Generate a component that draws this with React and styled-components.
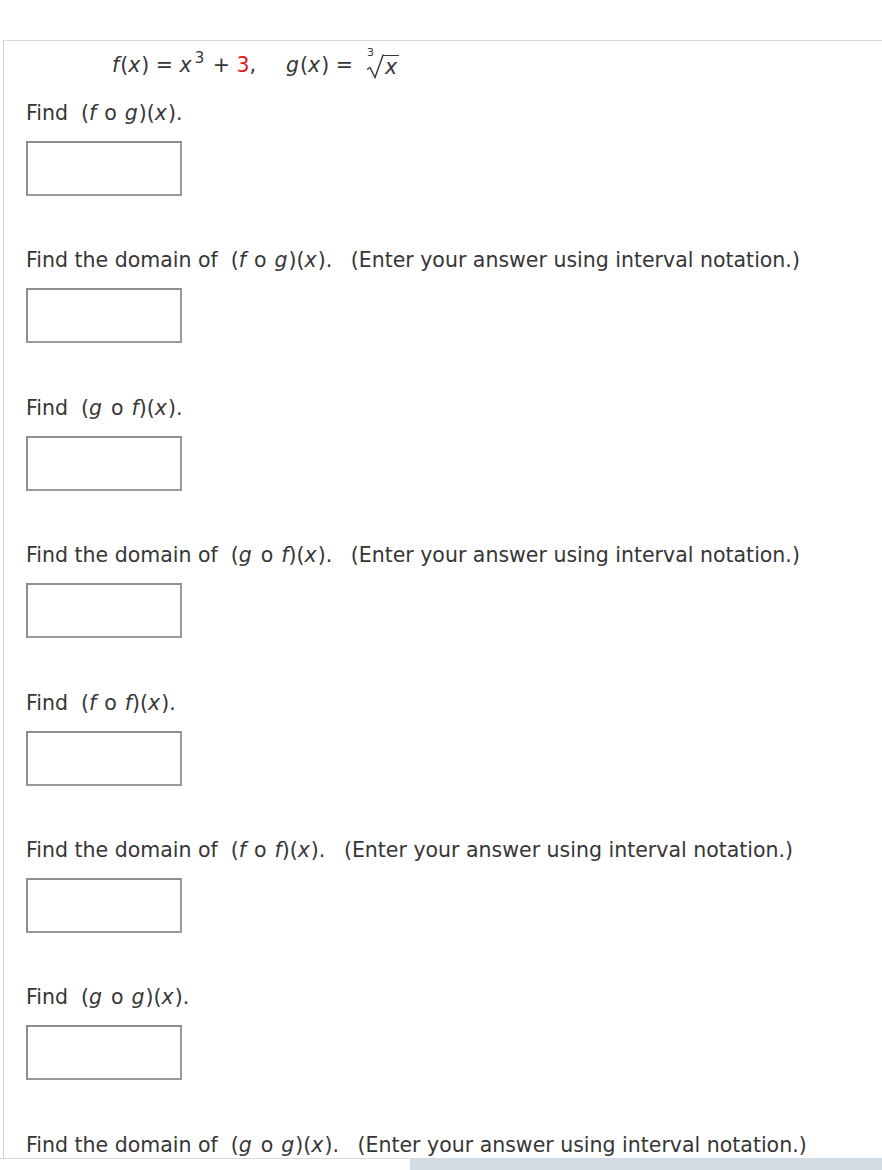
import React from 'react';
import styled, { createGlobalStyle } from 'styled-components';

const GlobalStyle = createGlobalStyle`
  html, body {
    margin: 0;
    padding: 0;
    background: #fff;
  }
  body {
    font-family: "DejaVu Sans", Verdana, sans-serif;
    color: #363636;
  }
`;

const Page = styled.div`
  width: 882px;
  height: 1170px;
  overflow: hidden;
  padding-top: 40px;
  box-sizing: border-box;
`;

const Panel = styled.div`
  margin-left: 3px;
  border-top: 1px solid #dcdcdc;
  border-left: 1px solid #cfcfcf;
  padding: 12px 0 1px 22px;
`;

const Equation = styled.div`
  display: flex;
  align-items: baseline;
  font-size: 20.5px;
  line-height: 24px;
  padding-left: 86px;
  margin-bottom: 22px;
  white-space: pre;
`;

const Gap = styled.span`
  display: inline-block;
  width: 30px;
`;

const Red = styled.span`
  color: #e0161b;
`;

const V = styled.i`
  font-style: italic;
  padding-right: ${p => (p.$tight ? '0' : '1px')};
`;

const Sup = styled.span`
  font-size: 15px;
  position: relative;
  top: -9px;
  margin: 0 2px 0 2px;
`;

const Root = styled.span`
  display: inline-flex;
  align-items: flex-start;
  position: relative;
  margin-left: 13px;
  align-self: center;
`;

const RootIndex = styled.span`
  position: absolute;
  left: 1px;
  top: -7px;
  font-size: 11px;
  line-height: 11px;
`;

const RadicalSign = styled.svg`
  display: block;
  width: 18px;
  height: 25px;
`;

const Radicand = styled.span`
  border-top: 1.5px solid #363636;
  padding: 0 2px 0 1px;
  margin-top: 1px;
  font-style: italic;
  line-height: 23px;
`;

const Question = styled.div`
  margin-bottom: 52.4px;
  &:last-child {
    margin-bottom: 0;
  }
`;

const Prompt = styled.div`
  font-size: 20.5px;
  line-height: 24px;
  white-space: nowrap;
`;

const Expr = styled.span`
  margin: 0 12px 0 13px;
`;

const Compose = styled.span`
  margin: 0 8px;
`;

const AnswerBox = styled.input`
  display: block;
  margin-top: 16px;
  width: 156px;
  height: 55px;
  box-sizing: border-box;
  border: 2px solid #8e8e8e;
  border-right-color: #9a9a9a;
  border-bottom-color: #9a9a9a;
  background: #fff;
  padding: 0 6px;
  font-size: 16px;
  outline: none;
`;

const Footer = styled.div`
  display: flex;
  height: 12px;
`;

const FooterLeft = styled.div`
  width: 410px;
  border-top: 1px solid #d8d8d8;
  background: #fff;
`;

const FooterRight = styled.div`
  flex: 1;
  background: #d3dce5;
`;

const Composition = ({ a, b }) => (
  <Expr>
    (<V $tight={a === 'f'}>{a}</V>
    <Compose>o</Compose>
    <V $tight={b === 'f'}>{b}</V>)(<V>x</V>).
  </Expr>
);

const CubeRoot = ({ children }) => (
  <Root>
    <RootIndex>3</RootIndex>
    <RadicalSign viewBox="0 0 18 25">
      <path
        d="M1 15.5 L4 13.5 L9 23.5 L17 1.2 L18 1.2"
        fill="none"
        stroke="#363636"
        strokeWidth="1.4"
        strokeLinejoin="miter"
      />
    </RadicalSign>
    <Radicand>{children}</Radicand>
  </Root>
);

const pairs = [
  ['f', 'g'],
  ['g', 'f'],
  ['f', 'f'],
  ['g', 'g'],
];

export default function App() {
  return (
    <Page>
      <GlobalStyle />
      <Panel>
        <Equation>
          <V>f</V>(<V>x</V>) = <V>x</V>
          <Sup>3</Sup> + <Red>3</Red>,<Gap />
          <V>g</V>(<V>x</V>) =
          <CubeRoot>x</CubeRoot>
        </Equation>
        {pairs.map(([a, b], i) => (
          <React.Fragment key={i}>
            <Question>
              <Prompt>
                Find<Composition a={a} b={b} />
              </Prompt>
              <AnswerBox type="text" aria-label={`(${a} o ${b})(x)`} />
            </Question>
            <Question>
              <Prompt>
                Find the domain of<Composition a={a} b={b} /> (Enter your answer using interval notation.)
              </Prompt>
              {i < pairs.length - 1 && (
                <AnswerBox type="text" aria-label={`domain of (${a} o ${b})(x)`} />
              )}
            </Question>
          </React.Fragment>
        ))}
      </Panel>
      <Footer>
        <FooterLeft />
        <FooterRight />
      </Footer>
    </Page>
  );
}
